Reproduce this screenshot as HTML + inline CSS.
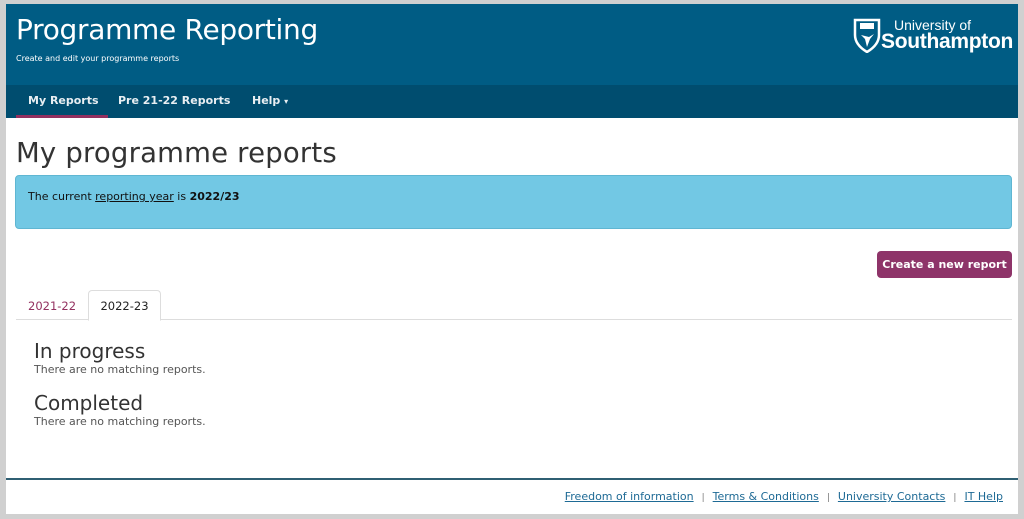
<!DOCTYPE html>
<html><head><style>
*{box-sizing:border-box;margin:0;padding:0}
body{width:1024px;height:519px;background:#d0d0d0;font-family:"DejaVu Sans",Verdana,sans-serif;position:relative;overflow:hidden}
.page{position:absolute;left:6px;top:4px;width:1012px;height:510px;background:#fff}
.hdr{position:absolute;left:0;top:0;width:1012px;height:81px;background:#005c84}
.hdr h1{position:absolute;left:10px;top:9px;font-weight:normal;font-size:28px;color:#fff;letter-spacing:-0.3px}
.hdr .sub{position:absolute;left:10px;top:50px;font-size:8px;color:#fff}
.nav{position:absolute;left:0;top:81px;width:1012px;height:33px;background:#004d6f}
.nav span{position:absolute;top:9px;font-size:11px;font-weight:bold;color:#e8eef2}
.ul{position:absolute;left:10px;top:111px;width:92px;height:3px;background:#93305f}
h2{position:absolute;left:10px;top:133px;font-weight:normal;font-size:27.5px;color:#333;letter-spacing:0.2px}
.alert{position:absolute;left:9px;top:171px;width:997px;height:54px;background:#72c8e4;border:1px solid #5fb6d2;border-radius:4px;font-size:11px;color:#111;padding:14px 12px}
.btn{position:absolute;left:871px;top:247px;width:135px;height:27px;background:#8e3469;border-radius:4px;color:#fff;font-weight:bold;font-size:11px;text-align:center;line-height:27px}
.tabs{position:absolute;left:10px;top:315px;width:996px;border-top:1px solid #ddd}
.tab1{position:absolute;left:22px;top:295px;font-size:11.5px;color:#93305f}
.tab2{position:absolute;left:82px;top:286px;width:73px;height:31px;border:1px solid #ddd;border-bottom:1px solid #fff;border-radius:4px 4px 0 0;background:#fff;font-size:11.5px;color:#222;text-align:center;line-height:30px}
h3{position:absolute;left:28px;font-weight:normal;font-size:20px;color:#333}
.p{position:absolute;left:28px;font-size:11px;color:#555}
.fline{position:absolute;left:0;top:474px;width:1012px;height:2px;background:#2f5f73}
.foot{position:absolute;right:15px;top:486px;font-size:11px;color:#555}
.foot a{color:#1e6a95;text-decoration:underline}
.foot i{font-style:normal;margin:0 8px;font-size:9px;color:#777}
</style></head><body>
<div class="page">
<div class="hdr"><h1>Programme Reporting</h1><div class="sub">Create and edit your programme reports</div>
<svg style="position:absolute;left:847px;top:13px" width="28" height="36" viewBox="0 0 28 36"><path d="M2 3 H26 V18 C26 27 19 32 14 35 C9 32 2 27 2 18 Z" fill="none" stroke="#fff" stroke-width="2.5"/><rect x="7" y="6" width="14" height="6" fill="#fff"/><path d="M8 18 L12 22 L14 30 L17 22 L21 17 L16 20 L12 19 Z" fill="#fff"/></svg>
<div style="position:absolute;left:888px;top:13px;color:#fff;font-family:'Liberation Sans',sans-serif;font-size:14px">University of</div>
<div style="position:absolute;left:875px;top:26px;color:#fff;font-family:'Liberation Sans',sans-serif;font-size:21px;font-weight:bold;letter-spacing:-0.3px">Southampton</div>
</div>
<div class="nav"><span style="left:22px">My Reports</span><span style="left:112px">Pre 21-22 Reports</span><span style="left:246px">Help <small style="font-size:8px">&#9662;</small></span></div>
<div class="ul"></div>
<h2>My programme reports</h2>
<div class="alert">The current <u>reporting year</u> is <b>2022/23</b></div>
<div class="btn">Create a new report</div>
<div class="tabs"></div>
<div class="tab1">2021-22</div>
<div class="tab2">2022-23</div>
<h3 style="top:335px">In progress</h3><div class="p" style="top:359px">There are no matching reports.</div>
<h3 style="top:387px">Completed</h3><div class="p" style="top:411px">There are no matching reports.</div>
<div class="fline"></div>
<div class="foot"><a>Freedom of information</a><i>|</i><a>Terms &amp; Conditions</a><i>|</i><a>University Contacts</a><i>|</i><a>IT Help</a></div>
</div>
</body></html>
